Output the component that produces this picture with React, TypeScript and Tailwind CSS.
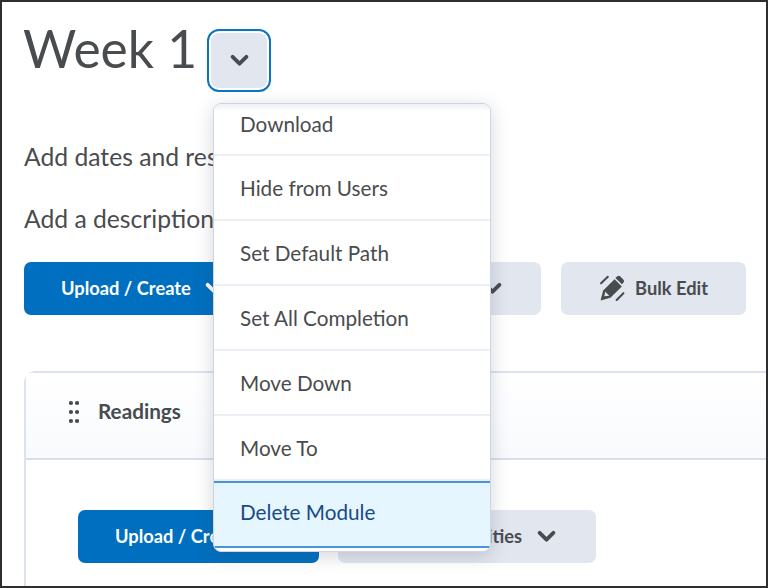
const items = ["Hide from Users", "Set Default Path", "Set All Completion", "Move Down", "Move To"];

function Chevron({ className }: { className: string }) {
  return (
    <svg viewBox="0 0 18 12" className={className} fill="none" stroke="currentColor" strokeWidth="3.6" strokeLinecap="round" strokeLinejoin="round">
      <path d="M2.5 2.5 9 9l6.5-6.5" />
    </svg>
  );
}

function Upload() {
  return (
    <div className="bg-[#006fbf] text-white w-[241px] h-[53px] rounded-[7px] flex items-center pl-[37px] gap-[14px] text-[18.3px] font-bold shrink-0">
      <span>Upload / Create</span>
      <Chevron className="w-[19px] h-[13px]" />
    </div>
  );
}

function Existing() {
  return (
    <div className="bg-[#e1e6ef] w-[258px] h-[53px] rounded-[7px] flex items-center justify-end pr-[40px] gap-[15px] text-[18.3px] font-bold shrink-0">
      <span>Existing Activities</span>
      <Chevron className="w-[19px] h-[13px]" />
    </div>
  );
}

function BulkIcon() {
  return (
    <svg viewBox="0 0 26 26" className="w-[27px] h-[27px] text-[#494c4e]" fill="currentColor">
      <path d="M1.5 24.5 4 15 15 4l7 7-11 11z" />
      <path d="M17 2.5 18.8.8c.8-.7 2-.7 2.7 0l3.3 3.3c.7.7.7 1.9 0 2.7L23.3 8.5z" transform="translate(-1.2 .4)" />
      <path d="M2 8 8.5 1.8" stroke="currentColor" strokeWidth="2" strokeLinecap="round" fill="none" />
      <path d="M17 24l6.5-6.5" stroke="currentColor" strokeWidth="2" strokeLinecap="round" fill="none" />
      <path d="M5 20.5 6.2 16.2l3.7 3.7z" fill="#e1e6ef" />
    </svg>
  );
}

export default function App() {
  return (
    <div className="relative w-[768px] h-[588px] overflow-hidden bg-white border-2 border-[#2e2e2e] text-[#494c4e] font-['Lato',sans-serif]">
      <div className="pl-[22px] pt-[27px] w-[800px]">
        <div className="flex items-start h-[62px]">
          <h1 className="text-[51.5px] leading-[42px] -mt-[2px] -ml-px font-normal">Week 1</h1>
          <div className="ml-[10px] w-[64px] h-[63px] rounded-[12px] border-[2.5px] border-[#0a75c2] p-[2px] bg-white shrink-0">
            <div className="w-full h-full rounded-[8px] bg-[#e1e6ef] flex items-center justify-center">
              <Chevron className="w-[19px] h-[13px] text-[#494c4e]" />
            </div>
          </div>
        </div>
        <p className="mt-[52px] text-[24.7px] leading-[28px]">Add dates and restrictions...</p>
        <p className="mt-[34px] text-[24.7px] leading-[28px]">Add a description...</p>
        <div className="mt-[29px] flex gap-[19px]">
          <Upload />
          <div className="w-[257px] overflow-hidden rounded-[7px] shrink-0"><Existing /></div>
          <div className="bg-[#e1e6ef] w-[185px] ml-px h-[53px] rounded-[7px] flex items-center justify-center gap-[9px] text-[18.3px] font-bold shrink-0">
            <BulkIcon />
            <span>Bulk Edit</span>
          </div>
        </div>
        <div className="mt-[56px] w-[780px] h-[240px] border-2 border-[#dde3ec] rounded-tl-[12px]">
          <div className="h-[87px] bg-gradient-to-b from-white to-[#f8fafd] border-b-2 border-[#d8dfe9] flex items-center pl-[43px] pb-[7px] gap-[19px]">
            <svg viewBox="0 0 10 24" className="w-[10px] h-[24px] text-[#494c4e]" fill="currentColor">
              {[3, 12, 21].map((y) => (
                <g key={y}>
                  <circle cx="2" cy={y} r="2.1" />
                  <circle cx="8" cy={y} r="2.1" />
                </g>
              ))}
            </svg>
            <span className="text-[20.7px] font-bold">Readings</span>
          </div>
          <div className="pl-[52px] pt-[50px] flex gap-[19px]">
            <Upload />
            <Existing />
          </div>
        </div>
      </div>

      <div className="absolute left-[211px] top-[101px] w-[278px] h-[449px] bg-white border border-[#cdd5e0] rounded-[8px] shadow-[0_4px_18px_rgba(60,70,90,0.22)] overflow-hidden">
        <div className="h-[52px] border-b-2 border-[#ebf0f6] pl-[26px] pt-[6px] text-[20.7px] leading-[28px]">
          <div className="absolute left-0 top-0 w-full h-[8px] bg-gradient-to-b from-[#eef0f3] to-white" />
          Download
        </div>
        {items.map((t) => (
          <div key={t} className="h-[65px] border-b-2 border-[#ebf0f6] last:border-b-0 pl-[26px] pt-[2px] flex items-center text-[20.7px]">
            {t}
          </div>
        ))}
        <div className="h-[67px] bg-[#e5f6fe] border-y-2 border-[#4a94d6] pl-[26px] pb-[3px] flex items-center text-[20.7px] text-[#1a4a86]">
          Delete Module
        </div>
      </div>
    </div>
  );
}
